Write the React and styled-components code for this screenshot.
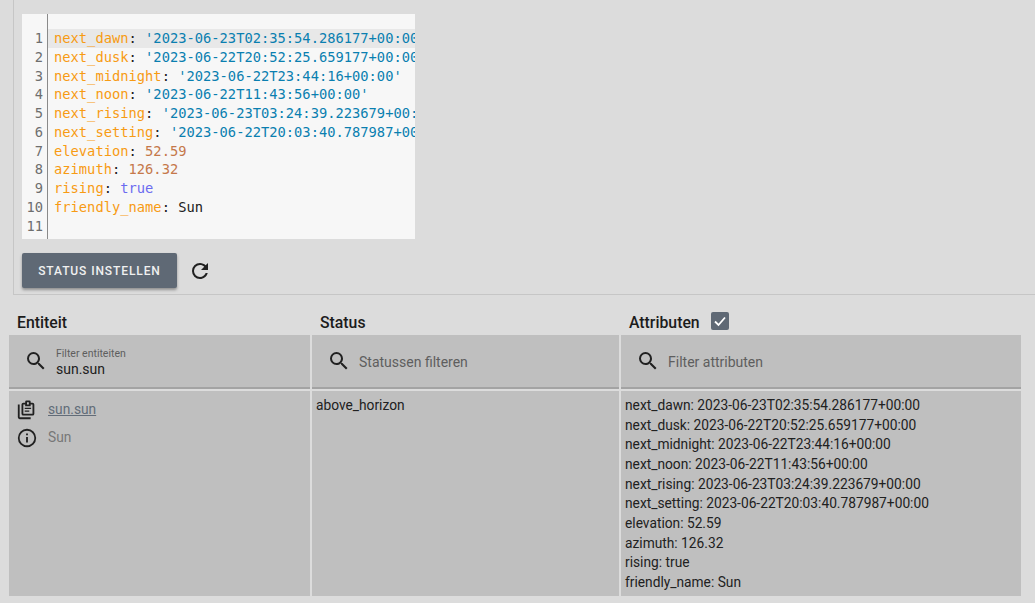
import React from 'react'
import styled, { createGlobalStyle } from 'styled-components'

const GlobalStyle = createGlobalStyle`
  html, body {
    margin: 0;
    height: 100%;
    overflow: hidden;
    background: #dcdcdc;
    font-family: Roboto, "Liberation Sans", sans-serif;
    color: #212121;
  }
`

const Page = styled.div`
  display: flex;
  flex-direction: column;
  width: 1035px;
  height: 603px;
  box-sizing: border-box;
`

const ServicePanel = styled.section`
  margin-left: 13px;
  height: 295px;
  box-sizing: border-box;
  padding: 14px 0 0 8px;
  border-left: 1px solid #c6c6c6;
  border-bottom: 1px solid #c6c6c6;
`

const Editor = styled.div`
  display: flex;
  width: 393px;
  height: 225px;
  overflow: hidden;
  background: #f7f7f7;
  font: 13.75px/18.75px "DejaVu Sans Mono", monospace;
`

const Gutter = styled.div`
  flex: none;
  box-sizing: border-box;
  width: 26px;
  padding: 15px 4px 0 0;
  border-right: 1px solid #8a8a8a;
  text-align: right;
  color: #6e6e6e;
`

const Lines = styled.div`
  flex: 1;
  min-width: 0;
  overflow: hidden;
  padding-top: 15px;
`

const Line = styled.div`
  padding-left: 6px;
  height: 18.75px;
  white-space: pre;
  color: #202020;
  background: ${props => (props.$active ? '#e8e8e8' : 'transparent')};
`

const Key = styled.span`
  color: #f79b13;
`

const Str = styled.span`
  color: #0a7fb0;
`

const Num = styled.span`
  color: #c5784a;
`

const Bool = styled.span`
  color: #6b6bf0;
`

const Actions = styled.div`
  display: flex;
  align-items: center;
  gap: 11px;
  margin-top: 14px;
`

const Button = styled.button`
  width: 155px;
  height: 35px;
  padding: 0;
  border: 0;
  border-radius: 2px;
  background: #5f6975;
  color: #f0f0f0;
  font: 500 12px Roboto, sans-serif;
  letter-spacing: 0.9px;
  box-shadow: 0 2px 3px rgba(0, 0, 0, 0.35);
`

const IconSvg = styled.svg`
  display: block;
  flex: none;
  width: ${props => props.$size || 24}px;
  height: ${props => props.$size || 24}px;
  fill: ${props => props.$color || '#212121'};
`

const Table = styled.div`
  display: grid;
  grid-template-columns: 301px 307px 400px;
  grid-template-rows: 40px 54px 207px;
  column-gap: 2px;
  width: 1012px;
  margin-left: 9px;
`

const HeadCell = styled.div`
  display: flex;
  align-items: flex-end;
  gap: 11px;
  box-sizing: border-box;
  padding: 0 0 3px ${props => props.$indent}px;
  font-weight: 500;
  font-size: 15.8px;
  line-height: 18px;
  color: #1c1c1c;
`

const Checkbox = styled.span`
  display: flex;
  align-items: center;
  justify-content: center;
  width: 18px;
  height: 18px;
  margin-bottom: 2px;
  border-radius: 2px;
  background: #5f6975;
`

const Search = styled.div`
  display: flex;
  align-items: center;
  gap: 8px;
  box-sizing: border-box;
  padding-left: 15px;
  background: #bfbfbf;
  border-bottom: 2px solid #a3a3a3;
`

const SearchText = styled.div`
  display: flex;
  flex-direction: column;
  margin-top: 2px;
`

const FloatLabel = styled.span`
  font-size: 10.5px;
  line-height: 13px;
  color: #5e5e5e;
`

const SearchValue = styled.span`
  font-size: 14px;
  line-height: 18px;
  color: #212121;
`

const Placeholder = styled.span`
  margin-top: 2px;
  font-size: 14px;
  color: #5e5e5e;
`

const Cell = styled.div`
  margin-top: 2px;
  padding: 5px 4px;
  background: #bfbfbf;
  font-size: 13.75px;
  line-height: 19.67px;
  color: #212121;
  box-sizing: border-box;
`

const EntityCell = styled(Cell)`
  display: flex;
  flex-direction: column;
  gap: 4px;
  padding: 7px;
`

const EntityRow = styled.div`
  display: flex;
  align-items: center;
  gap: 10px;
  height: 24px;
  color: ${props => (props.$muted ? '#777' : 'inherit')};
`

const EntityLink = styled.a`
  color: #626c78;
  text-decoration: underline;
`

const attributes = [
  ['next_dawn', '2023-06-23T02:35:54.286177+00:00'],
  ['next_dusk', '2023-06-22T20:52:25.659177+00:00'],
  ['next_midnight', '2023-06-22T23:44:16+00:00'],
  ['next_noon', '2023-06-22T11:43:56+00:00'],
  ['next_rising', '2023-06-23T03:24:39.223679+00:00'],
  ['next_setting', '2023-06-22T20:03:40.787987+00:00'],
  ['elevation', '52.59'],
  ['azimuth', '126.32'],
  ['rising', 'true'],
  ['friendly_name', 'Sun']
]

const renderValue = (key, value) => {
  if (key === 'rising') return <Bool>{value}</Bool>
  if (key === 'friendly_name') return value
  if (key === 'elevation' || key === 'azimuth') return <Num>{value}</Num>
  return <Str>'{value}'</Str>
}

const paths = {
  magnify: 'M9.5,3A6.5,6.5 0 0,1 16,9.5C16,11.11 15.41,12.59 14.44,13.73L14.71,14H15.5L20.5,19L19,20.5L14,15.5V14.71L13.73,14.44C12.59,15.41 11.11,16 9.5,16A6.5,6.5 0 0,1 3,9.5A6.5,6.5 0 0,1 9.5,3M9.5,5C7,5 5,7 5,9.5C5,12 7,14 9.5,14C12,14 14,12 14,9.5C14,7 12,5 9.5,5Z',
  refresh: 'M17.65,6.35C16.2,4.9 14.21,4 12,4A8,8 0 0,0 4,12A8,8 0 0,0 12,20C15.73,20 18.84,17.45 19.73,14H17.65C16.83,16.33 14.61,18 12,18A6,6 0 0,1 6,12A6,6 0 0,1 12,6C13.66,6 15.14,6.69 16.22,7.78L13,11H20V4L17.65,6.35Z',
  info: 'M11,9H13V7H11M12,20C7.59,20 4,16.41 4,12C4,7.59 7.59,4 12,4C16.41,4 20,7.59 20,12C20,16.41 16.41,20 12,20M12,2A10,10 0 0,0 2,12A10,10 0 0,0 12,22A10,10 0 0,0 22,12A10,10 0 0,0 12,2M11,17H13V11H11V17Z',
  clipboards: 'M2 6H4V20H16V22H4A2 2 0 0 1 2 20V6ZM18 4A2 2 0 0 1 20 6V16A2 2 0 0 1 18 18H8A2 2 0 0 1 6 16V6A2 2 0 0 1 8 4H10V3A1.5 1.5 0 0 1 11.5 1.5H14.5A1.5 1.5 0 0 1 16 3V4H18ZM8 6V16H18V6H16V8H10V6H8ZM12 3.5V6H14V3.5H12ZM9.5 9.5H16.5V11H9.5V9.5ZM9.5 12.5H14.5V14H9.5V12.5Z',
  check: 'M4 9.5L7.5 13L14 5.5'
}

const Icon = ({ name, size, color }) => (
  <IconSvg viewBox='0 0 24 24' $size={size} $color={color}>
    <path d={paths[name]} />
  </IconSvg>
)

const SearchIcon = () => <Icon name='magnify' size={24} />

const App = () => (
  <Page>
    <GlobalStyle />
    <ServicePanel>
      <Editor>
        <Gutter>
          {attributes.map((_, i) => <div key={i}>{i + 1}</div>)}
          <div>11</div>
        </Gutter>
        <Lines>
          {attributes.map(([key, value], i) => (
            <Line key={key} $active={i === 0}>
              <Key>{key}</Key>: {renderValue(key, value)}
            </Line>
          ))}
          <Line />
        </Lines>
      </Editor>
      <Actions>
        <Button>STATUS INSTELLEN</Button>
        <Icon name='refresh' size={24} />
      </Actions>
    </ServicePanel>
    <Table>
      <HeadCell $indent={8}>Entiteit</HeadCell>
      <HeadCell $indent={8}>Status</HeadCell>
      <HeadCell $indent={8}>
        Attributen
        <Checkbox>
          <svg width='18' height='18' viewBox='0 0 18 18' fill='none' stroke='#fff' strokeWidth='1.8'>
            <path d={paths.check} />
          </svg>
        </Checkbox>
      </HeadCell>

      <Search>
        <SearchIcon />
        <SearchText>
          <FloatLabel>Filter entiteiten</FloatLabel>
          <SearchValue>sun.sun</SearchValue>
        </SearchText>
      </Search>
      <Search>
        <SearchIcon />
        <Placeholder>Statussen filteren</Placeholder>
      </Search>
      <Search>
        <SearchIcon />
        <Placeholder>Filter attributen</Placeholder>
      </Search>

      <EntityCell>
        <EntityRow>
          <Icon name='clipboards' size={22} />
          <EntityLink>sun.sun</EntityLink>
        </EntityRow>
        <EntityRow $muted>
          <Icon name='info' size={22} />
          Sun
        </EntityRow>
      </EntityCell>
      <Cell>above_horizon</Cell>
      <Cell>
        {attributes.map(([key, value]) => (
          <div key={key}>{key}: {value}</div>
        ))}
      </Cell>
    </Table>
  </Page>
)

export default App
